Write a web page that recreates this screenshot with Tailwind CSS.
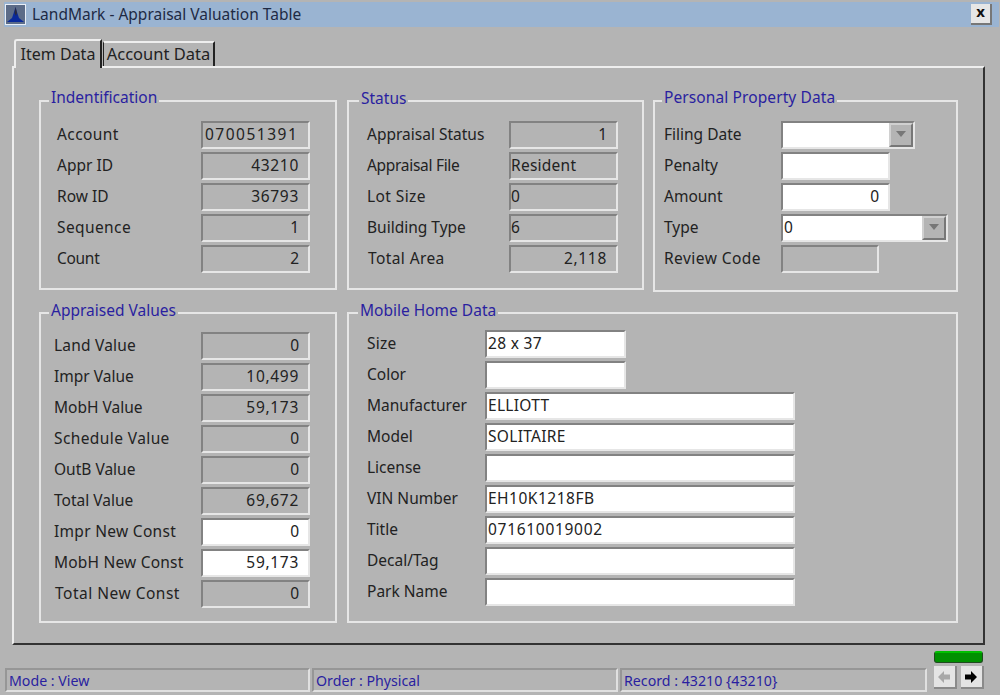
<!DOCTYPE html>
<html>
<head>
<meta charset="utf-8">
<script src="https://cdn.jsdelivr.net/npm/@tailwindcss/browser@4"></script>
</head>
<body class="m-0">
<div class="w-[1000px] h-[695px] overflow-hidden bg-[#b4b4b4] flex flex-col font-['Noto_Sans','DejaVu_Sans',sans-serif] text-[15.5px] text-[#222] relative">
  <!-- title bar -->
  <div class="h-[25px] mt-[2px] ml-[4px] mr-[1px] bg-[#9ab4d2] flex items-center shrink-0">
    <svg class="w-[21px] h-[21px] ml-[1px] shrink-0" viewBox="0 0 21 21"><rect x="0.5" y="0.5" width="20" height="20" fill="#5c6c88" stroke="#e8eef6"/><path d="M2 18 L7 14 L9 8 L10.5 3 L12 8 L14 14 L19 18 Z" fill="#0a2a9a"/><path d="M10.5 3 L12 9 L11 12 L9.5 9 Z" fill="#2b2b3b"/></svg>
    <span class="ml-[6px] pt-[1px] text-[#1e2a44] text-[15.5px]">LandMark - Appraisal Valuation Table</span>
    <div class="ml-auto mr-[7px] mb-[1px] w-[21px] h-[21px] bg-[#e6e6e6] border-r-2 border-b-2 border-[#777] flex items-center justify-center text-[15px] font-bold text-[#111] leading-none pb-[3px]">x</div>
  </div>
  <!-- tabs -->
  <div class="flex items-end h-[39px] pl-[14px] shrink-0 relative z-10">
    <div class="w-[88px] h-[29px] mb-[-2px] bg-[#b4b4b4] border-l-2 border-t-2 border-[#eee] rounded-tl-[3px] border-r-2 border-r-[#222] flex items-center justify-center pb-[2px] text-[16px]">Item Data</div>
    <div class="w-[112px] h-[25px] ml-[1px] border-t-2 border-[#eee] border-r-2 border-r-[#222] border-l border-l-[#222] flex items-center justify-center text-[16.5px]">Account Data</div>
  </div>
  <!-- panel -->
  <div class="ml-[12px] w-[973px] h-[579px] border-2 border-t-[#eee] border-l-[#eee] border-r-[#333] border-b-[#333] pl-[25px] pt-[32px] shrink-0 flex flex-col gap-[22px]">
    <div class="flex items-start h-[190px]">
      <!-- Indentification -->
      <div class="relative w-[298px] h-[190px] border-2 border-[#e6e6e6] pl-[16px] pt-[17px] flex flex-col">
        <span class="absolute left-[8px] top-[-16px] px-[2px] bg-[#b4b4b4] text-[#2a1fa0]">Indentification</span>
        <div class="flex items-center h-[31px]"><span class="w-[144px] tracking-[0.4px]">Account</span><div class="w-[109px] h-[28px] border-2 border-t-[#828282] border-l-[#828282] border-r-[#e6e6e6] border-b-[#e6e6e6] flex items-center px-[2px] tracking-[1.5px]">070051391</div></div>
        <div class="flex items-center h-[31px]"><span class="w-[144px]">Appr ID</span><div class="w-[109px] h-[28px] border-2 border-t-[#828282] border-l-[#828282] border-r-[#e6e6e6] border-b-[#e6e6e6] flex items-center justify-end pr-[9px] tracking-[0.7px]">43210</div></div>
        <div class="flex items-center h-[31px]"><span class="w-[144px]">Row ID</span><div class="w-[109px] h-[28px] border-2 border-t-[#828282] border-l-[#828282] border-r-[#e6e6e6] border-b-[#e6e6e6] flex items-center justify-end pr-[9px] tracking-[0.7px]">36793</div></div>
        <div class="flex items-center h-[31px]"><span class="w-[144px] tracking-[0.4px]">Sequence</span><div class="w-[109px] h-[28px] border-2 border-t-[#828282] border-l-[#828282] border-r-[#e6e6e6] border-b-[#e6e6e6] flex items-center justify-end pr-[9px]">1</div></div>
        <div class="flex items-center h-[31px]"><span class="w-[144px] tracking-[-0.3px]">Count</span><div class="w-[109px] h-[28px] border-2 border-t-[#828282] border-l-[#828282] border-r-[#e6e6e6] border-b-[#e6e6e6] flex items-center justify-end pr-[9px]">2</div></div>
      </div>
      <!-- Status -->
      <div class="relative ml-[10px] w-[297px] h-[190px] border-2 border-[#e6e6e6] pl-[18px] pt-[17px] flex flex-col">
        <span class="absolute left-[10px] top-[-15px] px-[2px] bg-[#b4b4b4] text-[#2a1fa0]">Status</span>
        <div class="flex items-center h-[31px]"><span class="w-[142px]">Appraisal Status</span><div class="w-[109px] h-[28px] border-2 border-t-[#828282] border-l-[#828282] border-r-[#e6e6e6] border-b-[#e6e6e6] flex items-center justify-end pr-[9px]">1</div></div>
        <div class="flex items-center h-[31px]"><span class="w-[142px] tracking-[-0.3px]">Appraisal File</span><div class="w-[109px] h-[28px] border-2 border-t-[#828282] border-l-[#828282] border-r-[#e6e6e6] border-b-[#e6e6e6] flex items-center tracking-[0.25px]">Resident</div></div>
        <div class="flex items-center h-[31px]"><span class="w-[142px] tracking-[0.4px]">Lot Size</span><div class="w-[109px] h-[28px] border-2 border-t-[#828282] border-l-[#828282] border-r-[#e6e6e6] border-b-[#e6e6e6] flex items-center">0</div></div>
        <div class="flex items-center h-[31px]"><span class="w-[142px]">Building Type</span><div class="w-[109px] h-[28px] border-2 border-t-[#828282] border-l-[#828282] border-r-[#e6e6e6] border-b-[#e6e6e6] flex items-center">6</div></div>
        <div class="flex items-center h-[31px]"><span class="w-[142px] pl-[1px] tracking-[0.4px]">Total Area</span><div class="w-[109px] h-[28px] border-2 border-t-[#828282] border-l-[#828282] border-r-[#e6e6e6] border-b-[#e6e6e6] flex items-center justify-end pr-[9px] tracking-[0.7px]">2,118</div></div>
      </div>
      <!-- Personal -->
      <div class="relative ml-[9px] w-[305px] h-[192px] border-2 border-[#e6e6e6] pl-[9px] pt-[17px] flex flex-col">
        <span class="absolute left-[7px] top-[-16px] px-[2px] bg-[#b4b4b4] text-[#2a1fa0] tracking-[0.1px]">Personal Property Data</span>
        <div class="flex items-center h-[31px]"><span class="w-[117px]">Filing Date</span><div class="w-[134px] h-[28px] border-2 border-t-[#828282] border-l-[#828282] border-r-[#e6e6e6] border-b-[#e6e6e6] flex"><div class="flex-1 bg-white"></div><div class="w-[24px] bg-[#b4b4b4] border-2 border-t-[#d0d0d0] border-l-[#d0d0d0] border-r-[#777] border-b-[#777] flex items-center justify-center"><svg class="w-[12px] h-[7px]" viewBox="0 0 12 7"><path d="M1 0H11L6 6Z" fill="#777"/></svg></div></div></div>
        <div class="flex items-center h-[31px]"><span class="w-[117px]">Penalty</span><div class="w-[109px] h-[28px] border-2 border-t-[#828282] border-l-[#828282] border-r-[#e6e6e6] border-b-[#e6e6e6] bg-white"></div></div>
        <div class="flex items-center h-[31px]"><span class="w-[117px]">Amount</span><div class="w-[109px] h-[28px] border-2 border-t-[#828282] border-l-[#828282] border-r-[#e6e6e6] border-b-[#e6e6e6] bg-white flex items-center justify-end pr-[9px]">0</div></div>
        <div class="flex items-center h-[31px]"><span class="w-[117px]">Type</span><div class="w-[167px] h-[28px] border-2 border-t-[#828282] border-l-[#828282] border-r-[#e6e6e6] border-b-[#e6e6e6] flex"><div class="flex-1 bg-white flex items-center px-[1px]">0</div><div class="w-[24px] bg-[#b4b4b4] border-2 border-t-[#d0d0d0] border-l-[#d0d0d0] border-r-[#777] border-b-[#777] flex items-center justify-center"><svg class="w-[12px] h-[7px]" viewBox="0 0 12 7"><path d="M1 0H11L6 6Z" fill="#777"/></svg></div></div></div>
        <div class="flex items-center h-[31px]"><span class="w-[117px] tracking-[0.45px]">Review Code</span><div class="w-[98px] h-[28px] border-2 border-t-[#828282] border-l-[#828282] border-r-[#e6e6e6] border-b-[#e6e6e6]"></div></div>
      </div>
    </div>
    <div class="flex items-start h-[311px]">
      <!-- Appraised -->
      <div class="relative w-[298px] h-[311px] border-2 border-[#e6e6e6] pl-[13px] pt-[16px] flex flex-col">
        <span class="absolute left-[8px] top-[-15px] px-[2px] bg-[#b4b4b4] text-[#2a1fa0]">Appraised Values</span>
        <div class="flex items-center h-[31px]"><span class="w-[147px] tracking-[0.2px]">Land Value</span><div class="w-[109px] h-[28px] border-2 border-t-[#828282] border-l-[#828282] border-r-[#e6e6e6] border-b-[#e6e6e6] flex items-center justify-end pr-[9px]">0</div></div>
        <div class="flex items-center h-[31px]"><span class="w-[147px]">Impr Value</span><div class="w-[109px] h-[28px] border-2 border-t-[#828282] border-l-[#828282] border-r-[#e6e6e6] border-b-[#e6e6e6] flex items-center justify-end pr-[9px] tracking-[0.7px]">10,499</div></div>
        <div class="flex items-center h-[31px]"><span class="w-[147px]">MobH Value</span><div class="w-[109px] h-[28px] border-2 border-t-[#828282] border-l-[#828282] border-r-[#e6e6e6] border-b-[#e6e6e6] flex items-center justify-end pr-[9px] tracking-[0.7px]">59,173</div></div>
        <div class="flex items-center h-[31px]"><span class="w-[147px] tracking-[0.4px]">Schedule Value</span><div class="w-[109px] h-[28px] border-2 border-t-[#828282] border-l-[#828282] border-r-[#e6e6e6] border-b-[#e6e6e6] flex items-center justify-end pr-[9px]">0</div></div>
        <div class="flex items-center h-[31px]"><span class="w-[147px]">OutB Value</span><div class="w-[109px] h-[28px] border-2 border-t-[#828282] border-l-[#828282] border-r-[#e6e6e6] border-b-[#e6e6e6] flex items-center justify-end pr-[9px]">0</div></div>
        <div class="flex items-center h-[31px]"><span class="w-[147px]">Total Value</span><div class="w-[109px] h-[28px] border-2 border-t-[#828282] border-l-[#828282] border-r-[#e6e6e6] border-b-[#e6e6e6] flex items-center justify-end pr-[9px] tracking-[0.7px]">69,672</div></div>
        <div class="flex items-center h-[31px]"><span class="w-[147px] tracking-[0.3px]">Impr New Const</span><div class="w-[109px] h-[28px] border-2 border-t-[#828282] border-l-[#828282] border-r-[#e6e6e6] border-b-[#e6e6e6] bg-white flex items-center justify-end pr-[9px]">0</div></div>
        <div class="flex items-center h-[31px]"><span class="w-[147px] tracking-[0.2px]">MobH New Const</span><div class="w-[109px] h-[28px] border-2 border-t-[#828282] border-l-[#828282] border-r-[#e6e6e6] border-b-[#e6e6e6] bg-white flex items-center justify-end pr-[9px] tracking-[0.7px]">59,173</div></div>
        <div class="flex items-center h-[31px]"><span class="w-[147px] pl-[1px] tracking-[0.5px]">Total New Const</span><div class="w-[109px] h-[28px] border-2 border-t-[#828282] border-l-[#828282] border-r-[#e6e6e6] border-b-[#e6e6e6] flex items-center justify-end pr-[9px]">0</div></div>
      </div>
      <!-- Mobile -->
      <div class="relative ml-[10px] w-[611px] h-[311px] border-2 border-[#e6e6e6] pl-[18px] pt-[14px] flex flex-col">
        <span class="absolute left-[9px] top-[-15px] px-[2px] bg-[#b4b4b4] text-[#2a1fa0]">Mobile Home Data</span>
        <div class="flex items-center h-[31px]"><span class="w-[118px] tracking-[0.2px]">Size</span><div class="w-[141px] h-[28px] border-2 border-t-[#828282] border-l-[#828282] border-r-[#e6e6e6] border-b-[#e6e6e6] bg-white flex items-center px-[1px] tracking-[0.3px]">28 x 37</div></div>
        <div class="flex items-center h-[31px]"><span class="w-[118px]">Color</span><div class="w-[141px] h-[28px] border-2 border-t-[#828282] border-l-[#828282] border-r-[#e6e6e6] border-b-[#e6e6e6] bg-white"></div></div>
        <div class="flex items-center h-[31px]"><span class="w-[118px]">Manufacturer</span><div class="w-[310px] h-[28px] border-2 border-t-[#828282] border-l-[#828282] border-r-[#e6e6e6] border-b-[#e6e6e6] bg-white flex items-center px-[1px] tracking-[0.3px]">ELLIOTT</div></div>
        <div class="flex items-center h-[31px]"><span class="w-[118px]">Model</span><div class="w-[310px] h-[28px] border-2 border-t-[#828282] border-l-[#828282] border-r-[#e6e6e6] border-b-[#e6e6e6] bg-white flex items-center px-[1px] tracking-[0.3px]">SOLITAIRE</div></div>
        <div class="flex items-center h-[31px]"><span class="w-[118px]">License</span><div class="w-[310px] h-[28px] border-2 border-t-[#828282] border-l-[#828282] border-r-[#e6e6e6] border-b-[#e6e6e6] bg-white"></div></div>
        <div class="flex items-center h-[31px]"><span class="w-[118px]">VIN Number</span><div class="w-[310px] h-[28px] border-2 border-t-[#828282] border-l-[#828282] border-r-[#e6e6e6] border-b-[#e6e6e6] bg-white flex items-center px-[1px] tracking-[0.5px]">EH10K1218FB</div></div>
        <div class="flex items-center h-[31px]"><span class="w-[118px]">Title</span><div class="w-[310px] h-[28px] border-2 border-t-[#828282] border-l-[#828282] border-r-[#e6e6e6] border-b-[#e6e6e6] bg-white flex items-center px-[1px] tracking-[0.7px]">071610019002</div></div>
        <div class="flex items-center h-[31px]"><span class="w-[118px]">Decal/Tag</span><div class="w-[310px] h-[28px] border-2 border-t-[#828282] border-l-[#828282] border-r-[#e6e6e6] border-b-[#e6e6e6] bg-white"></div></div>
        <div class="flex items-center h-[31px]"><span class="w-[118px]">Park Name</span><div class="w-[310px] h-[28px] border-2 border-t-[#828282] border-l-[#828282] border-r-[#e6e6e6] border-b-[#e6e6e6] bg-white"></div></div>
      </div>
    </div>
  </div>
  <!-- bottom -->
  <div class="flex pl-[5px] mt-[8px] items-end shrink-0 h-[39px]">
    <div class="flex gap-[2px] text-[#2a1fa0] text-[14.2px]">
      <div class="w-[305px] h-[24px] border-2 border-t-[#969696] border-l-[#969696] border-r-[#e0e0e0] border-b-[#e0e0e0] flex items-center px-[2px] pt-[1px]">Mode : View</div>
      <div class="w-[306px] h-[24px] border-2 border-t-[#969696] border-l-[#969696] border-r-[#e0e0e0] border-b-[#e0e0e0] flex items-center px-[2px] pt-[1px]">Order : Physical</div>
      <div class="w-[307px] h-[24px] border-2 border-t-[#969696] border-l-[#969696] border-r-[#e0e0e0] border-b-[#e0e0e0] flex items-center px-[2px] pt-[1px]">Record : 43210 {43210}</div>
    </div>
    <div class="ml-[6px] flex flex-col items-center w-[51px] mb-[3px]">
      <div class="w-[49px] h-[12px] mb-[3px] rounded-[3px] bg-[#009000] border border-[#1f4a1f] border-t-2 border-t-[#00c000]"></div>
      <div class="flex gap-[4px]">
        <div class="w-[23px] h-[23px] bg-[#e4e4e4] border-r-2 border-b-2 border-[#8a8a8a] flex items-center justify-center"><svg class="w-[14px] h-[14px]" viewBox="0 0 14 14"><path d="M1 7L7 1V4.5H13V9.5H7V13Z" fill="#a8a8a8"/></svg></div>
        <div class="w-[23px] h-[23px] bg-[#e4e4e4] border-r-2 border-b-2 border-[#8a8a8a] flex items-center justify-center"><svg class="w-[14px] h-[14px]" viewBox="0 0 14 14"><path d="M13 7L7 1V4.5H1V9.5H7V13Z" fill="#000"/></svg></div>
      </div>
    </div>
  </div>
</div>
</body>
</html>
